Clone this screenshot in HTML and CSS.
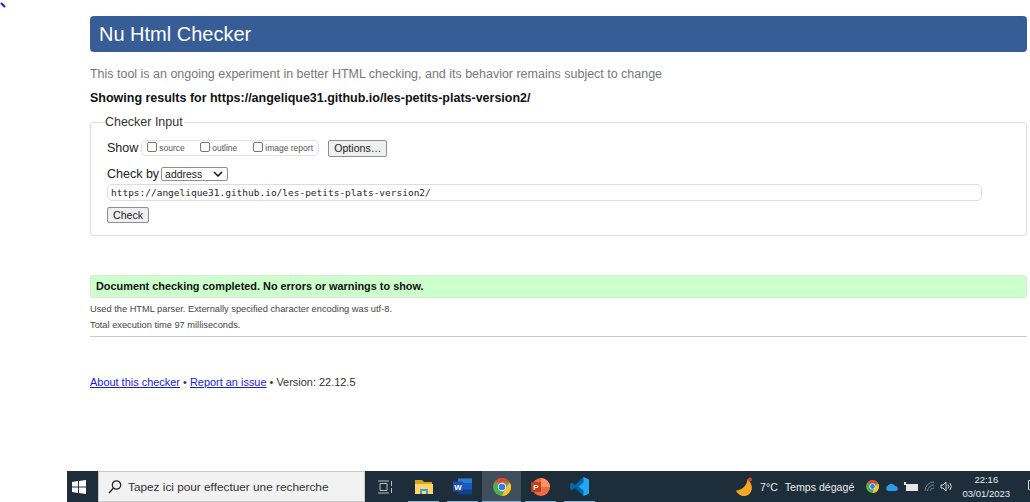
FILE: index.html
```html
<!DOCTYPE html>
<html lang="en">
<head>
<meta charset="utf-8">
<title>Nu Html Checker</title>
<link rel="stylesheet" href="styles.css">
</head>
<body>
<svg class="corner" width="8" height="8" viewBox="0 0 8 8"><path d="M1 3 L5 7" stroke="#1818d8" stroke-width="2"/></svg>
<main class="page">
  <h1 class="title">Nu Html Checker</h1>
  <p class="intro">This tool is an ongoing experiment in better HTML checking, and its behavior remains subject to change</p>
  <p class="showing">Showing results for https://angelique31.github.io/les-petits-plats-version2/</p>
  <fieldset class="input-box">
    <legend>Checker Input</legend>
    <div class="row-show">
      <span class="lbl">Show</span>
      <span class="opts">
        <label class="opt"><span class="cb"></span>source</label>
        <label class="opt"><span class="cb"></span>outline</label>
        <label class="opt"><span class="cb"></span>image report</label>
      </span>
      <span class="btn btn-opt">Options…</span>
    </div>
    <div class="row-by">
      <span class="lbl">Check by</span>
      <span class="select">address<svg width="10" height="6" viewBox="0 0 10 6"><path d="M1 1 L5 5 L9 1" fill="none" stroke="#111" stroke-width="1.5"/></svg></span>
    </div>
    <div class="url">https://angelique31.github.io/les-petits-plats-version2/</div>
    <span class="btn btn-check">Check</span>
  </fieldset>
  <div class="success">Document checking completed. No errors or warnings to show.</div>
  <p class="note n1">Used the HTML parser. Externally specified character encoding was utf-8.</p>
  <p class="note n2">Total execution time 97 milliseconds.</p>
  <hr class="rule">
  <p class="foot"><a href="#">About this checker</a> • <a href="#">Report an issue</a> • Version: 22.12.5</p>
</main>
<footer class="taskbar">
  <span class="start"><svg width="14" height="14" viewBox="0 0 14 14"><path fill="#fff" d="M0 2 L6 1 V6.500 H0 Z M7 .9 L14 0 V6.500 H7 Z M0 7.500 H6 V13 L0 12 Z M7 7.500 H14 V14 L7 13.100 Z"/></svg></span>
  <div class="search">
    <svg width="16" height="16" viewBox="0 0 16 16"><circle cx="9.500" cy="6" r="4.200" fill="none" stroke="#222" stroke-width="1.200"/><path d="M6.500 9 L2 14" stroke="#222" stroke-width="1.300"/></svg>
    <span>Tapez ici pour effectuer une recherche</span>
  </div>
  <span class="app"><svg width="16" height="14" viewBox="0 0 16 14"><path fill="none" stroke="#b9c0c6" d="M3 3.500 H10 V10.500 H3 Z M1 1 H12 M1 13 H12 M14.500 1 V6 M14.500 8 V13"/></svg></span>
  <span class="app on"><svg width="18" height="16" viewBox="0 0 18 16"><path fill="#d9a526" d="M0 1 H7 L9 3 H17 V6 H0 Z"/><path fill="#ffd768" d="M0 5 H18 V15 H0 Z"/><path fill="#3aa0d8" d="M5 10 H13 V15 H11 V12 H7 V15 H5 Z"/></svg></span>
  <span class="app on"><svg width="19" height="17" viewBox="0 0 19 16"><path fill="#103f91" d="M5 0 H19 V16 H5 Z"/><path fill="#2b7cd3" d="M5 0 H19 V5 H5 Z"/><path fill="#185abd" d="M5 5 H19 V11 H5 Z"/><path fill="#1f4fa8" d="M0 3 H10 V13 H0 Z"/><text x="5" y="11" class="mini">W</text></svg></span>
  <span class="app on chrome"><svg width="18" height="18" viewBox="0 0 18 18"><circle cx="9" cy="9" r="9" fill="#4caf50"/><path fill="#ea4335" d="M1.200 4.500 A9 9 0 0 1 16.800 4.500 H9 Z"/><path fill="#fbc02d" d="M16.800 4.500 A9 9 0 0 1 9 18 L12.500 10 Z"/><circle cx="9" cy="9" r="4.200" fill="#fff"/><circle cx="9" cy="9" r="3.300" fill="#3b78e7"/></svg></span>
  <span class="app on"><svg width="19" height="18" viewBox="0 0 19 18"><circle cx="10" cy="9" r="9" fill="#ed6c47"/><path fill="#ff8f6b" d="M10 0 A9 9 0 0 1 19 9 H10 Z"/><path fill="#c43e1c" d="M0 4 H10 V14 H0 Z"/><text x="5" y="12" class="mini">P</text></svg></span>
  <span class="app on"><svg width="19" height="19" viewBox="0 0 19 19"><path fill="#0065a9" d="M13.500 0 L19 2.500 V16.500 L13.500 19 L5 11 L2 13.500 L0 12 V7 L2 5.500 L5 8 Z"/><path fill="#23a7f2" d="M13.500 0 L19 2.500 V16.500 L13.500 19 V13.500 L8.500 9.500 L13.500 5.500 Z"/></svg></span>
  <div class="tray">
    <svg width="20" height="20" viewBox="0 0 20 20"><path fill="#f5a623" d="M12.500 2 C12 9 7 13 1 13.500 C3 18 7 19.500 10 19 C17 18 20 9 12.500 2 Z"/><circle cx="15" cy="2.500" r="2" fill="#d8432f"/></svg>
    <span class="temp">7°C</span>
    <span class="weather">Temps dégagé</span>
    <svg class="t-chrome" width="13" height="13" viewBox="0 0 18 18"><circle cx="9" cy="9" r="9" fill="#4caf50"/><path fill="#ea4335" d="M1.200 4.500 A9 9 0 0 1 16.800 4.500 H9 Z"/><path fill="#fbc02d" d="M16.800 4.500 A9 9 0 0 1 9 18 L12.500 10 Z"/><circle cx="9" cy="9" r="4.200" fill="#fff"/><circle cx="9" cy="9" r="3.300" fill="#3b78e7"/></svg>
    <svg class="t-cloud" width="13" height="8" viewBox="0 0 13 8"><path fill="#2a9de8" d="M3 8 A3 3 0 0 1 3 2.500 A4 4 0 0 1 10 3 A2.500 2.500 0 0 1 10.500 8 Z"/></svg>
    <svg class="t-batt" width="14" height="9" viewBox="0 0 14 9"><path fill="#e6e6e6" d="M2 2 H14 V9 H2 Z"/><path fill="#e6e6e6" d="M0 0 H2 V3 H0 Z"/></svg>
    <svg class="t-wifi" width="12" height="11" viewBox="0 0 12 11"><path fill="none" stroke="#7e878e" d="M1 10 A9 9 0 0 1 10 1 M3.500 10 A6.500 6.500 0 0 1 10 4 M6 10 A4 4 0 0 1 10 7"/></svg>
    <svg class="t-vol" width="13" height="11" viewBox="0 0 13 11"><path fill="none" stroke="#d5d8da" d="M1 4 H3 L6 1 V10 L3 7 H1 Z M8 3.500 Q9.500 5.500 8 7.500 M10 2 Q12.500 5.500 10 9"/></svg>
    <span class="clock"><span>22:16</span><span>03/01/2023</span></span>
    <svg class="t-note" width="12" height="13" viewBox="0 0 12 13"><path fill="none" stroke="#d5d8da" d="M.5 .5 H11.500 V9.500 H8 L6 12 V9.500 H.5 Z"/></svg>
  </div>
</footer>
</body>
</html>
```
FILE: styles.css
```css
* { box-sizing: border-box; }
html, body { margin: 0; padding: 0; }
body {
  width: 1030px;
  height: 502px;
  position: relative;
  overflow: hidden;
  background: #fff;
  font-family: "Liberation Sans", Arial, sans-serif;
  color: #222;
}
.corner { position: absolute; left: 0; top: 0; }
.page { padding: 16px 3px 0 90px; height: 471px; }
.title {
  margin: 0;
  height: 36px;
  padding-left: 9px;
  background: #365d95;
  color: #fff;
  border-radius: 4px;
  font-size: 20px;
  font-weight: 400;
  line-height: 36px;
}
.intro { margin: 14px 0 0; font-size: 12.470px; line-height: 16px; color: #777; }
.showing { margin: 8px 0 0; font-size: 12.490px; line-height: 16px; font-weight: 700; color: #111; }
.input-box {
  margin: 9px 0 0;
  padding: 8px 15px 0 16px;
  height: 121px;
  border: 1px solid #ddd;
  border-radius: 4px;
}
.input-box legend { padding: 0 1px 0 0; margin-left: -2px; font-size: 12.470px; line-height: 14px; color: #333; }
.row-show { display: flex; align-items: center; height: 18px; margin-top: 2px; }
.lbl { font-size: 12.500px; color: #222; }
.opts {
  display: flex;
  align-items: center;
  height: 16px;
  width: 178px;
  margin-left: 3px;
  padding-left: 5px;
  border: 1px solid #e2e2e2;
  border-radius: 5px;
}
.opt { display: flex; align-items: center; font-size: 8.500px; color: #555; width: 53px; }
.opt:last-child { width: auto; }
.cb { width: 10px; height: 10px; margin: -3px 2px 0 0; border: 1px solid #767676; border-radius: 2px; background: #fff; }
.btn {
  display: inline-flex;
  align-items: center;
  justify-content: center;
  background: #efefef;
  border: 1px solid #8f8f8f;
  border-radius: 2px;
  font-size: 10.600px;
  color: #222;
}
.btn-opt { width: 59px; height: 17px; margin-left: 9px; }
.row-by { display: flex; align-items: center; height: 16px; margin-top: 9px; }
.select {
  display: flex;
  align-items: center;
  justify-content: space-between;
  width: 67px;
  height: 14px;
  margin-left: 2px;
  padding: 0 4px 0 3px;
  border: 1px solid #8f8f8f;
  border-radius: 2px;
  font-size: 10.400px;
  color: #222;
}
.url {
  height: 17px;
  margin: 2px 29px 0 0;
  padding-left: 3px;
  border: 1px solid #ddd;
  border-radius: 5px;
  font-family: "DejaVu Sans Mono", monospace;
  font-size: 9.490px;
  line-height: 15px;
  color: #222;
}
.btn-check { width: 42px; height: 16px; margin-top: 6px; }
.success {
  margin-top: 39px;
  height: 23px;
  padding-left: 5px;
  background: #ccffcc;
  border: 1px solid #d6ecd6;
  border-radius: 3px;
  font-size: 10.900px;
  font-weight: 700;
  line-height: 21px;
  color: #111;
}
.note { margin: 0; font-size: 9.280px; line-height: 12px; color: #444; }
.n1 { margin-top: 5px; }
.n2 { margin-top: 4px; }
.rule { margin: 5px 0 0; border: 0; border-top: 1px solid #ccc; }
.foot { margin: 38px 0 0; font-size: 10.950px; line-height: 14px; color: #333; }
.foot a { color: #1a1ae6; }
.taskbar {
  position: absolute;
  left: 67px;
  right: 0;
  top: 471px;
  height: 31px;
  display: flex;
  align-items: center;
  background: #1e2d3a;
}
.start { width: 31px; flex: none; display: flex; justify-content: center; padding-right: 7px; }
.search {
  width: 267px;
  height: 31px;
  flex: none;
  display: flex;
  align-items: center;
  gap: 5px;
  padding-left: 8px;
  background: #f2f2f2;
  border: 1px solid #c9c9c9;
  font-size: 11.800px;
  color: #333;
}
.app {
  width: 39px;
  height: 31px;
  display: flex;
  align-items: center;
  justify-content: center;
  flex: none;
  position: relative;
}
.app.on::after {
  content: "";
  position: absolute;
  left: 4px;
  right: 4px;
  bottom: 0;
  height: 1px;
  background: #7fb8e6;
}
.app.chrome::after { left: 0; right: 0; }
.chrome { background: #3f4e5a; }
.mini { font: 700 8px "Liberation Sans", sans-serif; fill: #fff; text-anchor: middle; }
.tray { display: flex; align-items: center; flex: none; margin-left: 136px; height: 31px; color: #e8ecef; }
.temp { font-size: 10.600px; margin-left: 5px; }
.weather { font-size: 10.600px; margin-left: 7px; }
.t-chrome { margin-left: 12px; }
.t-cloud { margin-left: 6px; }
.t-batt { margin-left: 6px; }
.t-wifi { margin-left: 6px; }
.t-vol { margin-left: 4px; }
.clock {
  display: flex;
  flex-direction: column;
  align-items: center;
  width: 50px;
  margin-left: 8px;
  font-size: 9.500px;
  line-height: 14px;
}
.t-note { margin: 0 0 0 17px; }
```
